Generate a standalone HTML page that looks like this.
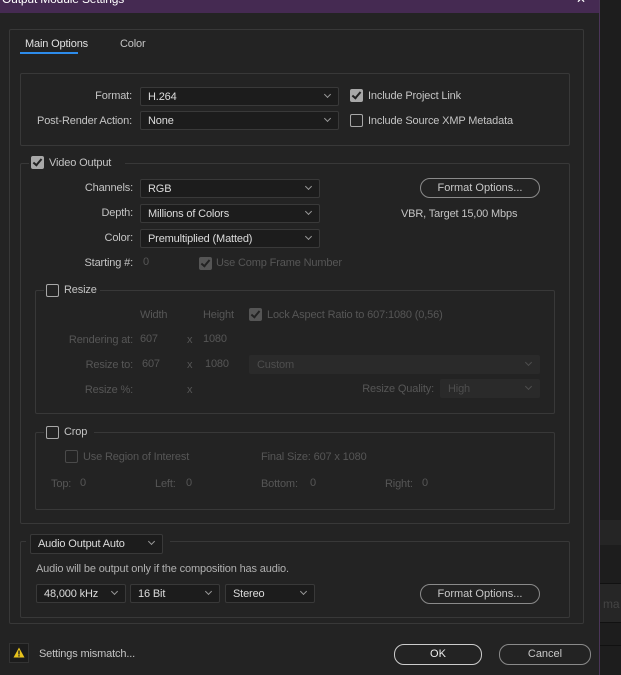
<!DOCTYPE html>
<html><head><meta charset="utf-8"><style>
*{margin:0;padding:0;box-sizing:border-box}
body{width:621px;height:675px;overflow:hidden;background:#232323;font-family:"Liberation Sans",sans-serif;font-size:11px;color:#c4c4c4;position:relative}
.a{position:absolute;white-space:nowrap;line-height:16px;letter-spacing:-0.15px}
.r{text-align:right}
.d{color:#565656}
.box{position:absolute;border:1px solid #383838;border-radius:2px}
.dd{position:absolute;background:#1c1c1c;border:1px solid #393939;border-radius:2px;color:#dcdcdc;padding-left:7px;line-height:18px;letter-spacing:-0.15px}
.dd.dis{background:#2a2a2a;border-color:#2a2a2a;color:#4e4e4e}
.dd:after{content:"";position:absolute;right:8px;top:4px;width:4px;height:4px;border-right:1px solid #999;border-bottom:1px solid #999;transform:rotate(45deg)}
.dd.dis:after{border-color:#4e4e4e}
.cb{position:absolute;width:13px;height:13px;border:1.5px solid #a8a8a8;border-radius:2px}
.cb.on{background:#a8a8a8;border-color:#a8a8a8}
.cb.on:after{content:"";position:absolute;left:3px;top:0px;width:3px;height:7px;border-right:2px solid #222;border-bottom:2px solid #222;transform:rotate(40deg)}
.cb.dis{border-color:#4a4a4a}
.cb.dis.on{background:#555;border-color:#555}
.btn{position:absolute;border:1px solid #8a8a8a;border-radius:10px;text-align:center;line-height:19px;color:#c8c8c8}
.leg{position:absolute;background:#232323;padding:0 6px 0 2px}
</style></head><body>
<div class="a" style="left:0;top:0;width:600px;height:13px;background:#452a52"></div>
<div class="a" style="left:2px;top:-9px;color:#fff;font-size:12px">Output Module Settings</div>
<div class="a" style="left:576px;top:-9px;color:#fff;font-size:12px">✕</div>
<div class="a" style="left:599px;top:0;width:1px;height:675px;background:#4b3558"></div>
<div class="a" style="left:600px;top:0;width:21px;height:675px;background:#1d1d1d"></div>
<div class="a" style="left:600px;top:520px;width:21px;height:25px;background:#252525"></div>
<div class="a" style="left:600px;top:583px;width:21px;height:40px;background:#262626;border-top:1px solid #111;border-bottom:1px solid #111"></div>
<div class="a" style="left:600px;top:645px;width:21px;height:1px;background:#111"></div>
<div class="a" style="left:603px;top:596px;color:#444;font-size:12px">ma</div>

<div class="box" style="left:9px;top:29px;width:575px;height:595px"></div>
<div class="a" style="left:25px;top:36px;color:#e0e0e0">Main Options</div>
<div class="a" style="left:20px;top:52px;width:58px;height:2px;background:#2d8ceb"></div>
<div class="a" style="left:120px;top:36px">Color</div>

<div class="box" style="left:20px;top:73px;width:550px;height:73px"></div>
<div class="a r" style="left:20px;width:112px;top:88px">Format:</div>
<div class="dd" style="left:140px;top:87px;width:199px;height:19px">H.264</div>
<div class="a r" style="left:20px;width:112px;top:113px">Post-Render Action:</div>
<div class="dd" style="left:140px;top:111px;width:199px;height:19px">None</div>
<div class="cb on" style="left:350px;top:89px"></div>
<div class="a" style="left:368px;top:88px">Include Project Link</div>
<div class="cb" style="left:350px;top:114px"></div>
<div class="a" style="left:368px;top:113px">Include Source XMP Metadata</div>

<div class="box" style="left:20px;top:163px;width:550px;height:361px"></div>
<div class="leg" style="left:29px;top:155px;width:96px;height:16px"></div>
<div class="cb on" style="left:31px;top:156px"></div>
<div class="a" style="left:49px;top:155px">Video Output</div>
<div class="a r" style="left:20px;width:113px;top:180px">Channels:</div>
<div class="dd" style="left:140px;top:179px;width:180px;height:19px">RGB</div>
<div class="a r" style="left:20px;width:113px;top:205px">Depth:</div>
<div class="dd" style="left:140px;top:204px;width:180px;height:19px">Millions of Colors</div>
<div class="a r" style="left:20px;width:113px;top:230px">Color:</div>
<div class="dd" style="left:140px;top:229px;width:180px;height:19px">Premultiplied (Matted)</div>
<div class="a r" style="left:20px;width:113px;top:255px">Starting #:</div>
<div class="a d" style="left:143px;top:254px">0</div>
<div class="cb dis on" style="left:199px;top:257px"></div>
<div class="a d" style="left:216px;top:255px">Use Comp Frame Number</div>
<div class="btn" style="left:420px;top:178px;width:120px;height:20px">Format Options...</div>
<div class="a" style="left:401px;top:206px">VBR, Target 15,00 Mbps</div>

<div class="box" style="left:35px;top:290px;width:520px;height:124px"></div>
<div class="leg" style="left:44px;top:282px;width:56px;height:16px"></div>
<div class="cb" style="left:46px;top:284px"></div>
<div class="a" style="left:64px;top:282px">Resize</div>
<div class="a d" style="left:140px;top:307px">Width</div>
<div class="a d" style="left:203px;top:307px">Height</div>
<div class="cb dis on" style="left:249px;top:308px"></div>
<div class="a d" style="left:267px;top:307px">Lock Aspect Ratio to 607:1080 (0,56)</div>
<div class="a r d" style="left:35px;width:98px;top:332px">Rendering at:</div>
<div class="a d" style="left:140px;top:331px">607</div>
<div class="a d" style="left:187px;top:332px">x</div>
<div class="a d" style="left:203px;top:331px">1080</div>
<div class="a r d" style="left:35px;width:98px;top:357px">Resize to:</div>
<div class="a d" style="left:142px;top:356px">607</div>
<div class="a d" style="left:187px;top:357px">x</div>
<div class="a d" style="left:205px;top:356px">1080</div>
<div class="dd dis" style="left:249px;top:355px;width:291px;height:19px">Custom</div>
<div class="a r d" style="left:35px;width:98px;top:382px">Resize %:</div>
<div class="a d" style="left:187px;top:382px">x</div>
<div class="a r d" style="left:300px;width:134px;top:381px">Resize Quality:</div>
<div class="dd dis" style="left:440px;top:379px;width:100px;height:19px">High</div>

<div class="box" style="left:35px;top:432px;width:520px;height:78px"></div>
<div class="leg" style="left:44px;top:424px;width:50px;height:16px"></div>
<div class="cb" style="left:46px;top:426px"></div>
<div class="a" style="left:64px;top:424px">Crop</div>
<div class="cb dis" style="left:65px;top:450px"></div>
<div class="a d" style="left:83px;top:449px">Use Region of Interest</div>
<div class="a d" style="left:261px;top:449px">Final Size: 607 x 1080</div>
<div class="a d" style="left:51px;top:476px">Top:</div><div class="a d" style="left:80px;top:475px">0</div>
<div class="a d" style="left:155px;top:476px">Left:</div><div class="a d" style="left:186px;top:475px">0</div>
<div class="a d" style="left:261px;top:476px">Bottom:</div><div class="a d" style="left:310px;top:475px">0</div>
<div class="a d" style="left:385px;top:476px">Right:</div><div class="a d" style="left:422px;top:475px">0</div>

<div class="box" style="left:20px;top:541px;width:550px;height:77px"></div>
<div class="leg" style="left:26px;top:533px;width:144px;height:22px"></div>
<div class="dd" style="left:30px;top:534px;width:133px;height:20px;line-height:18px">Audio Output Auto</div>
<div class="a" style="left:36px;top:561px;color:#b0b0b0">Audio will be output only if the composition has audio.</div>
<div class="dd" style="left:36px;top:584px;width:90px;height:19px">48,000 kHz</div>
<div class="dd" style="left:130px;top:584px;width:90px;height:19px">16 Bit</div>
<div class="dd" style="left:225px;top:584px;width:90px;height:19px">Stereo</div>
<div class="btn" style="left:420px;top:584px;width:120px;height:20px">Format Options...</div>

<div class="a" style="left:9px;top:643px;width:20px;height:20px;background:#1c1c1c;border:1px solid #333"></div>
<svg class="a" style="left:13px;top:647px" width="12" height="11" viewBox="0 0 12 11"><path d="M6 0.5L11.5 10.5H0.5Z" fill="#e8c31c"/><rect x="5.3" y="3.5" width="1.4" height="4" fill="#222"/><rect x="5.3" y="8.2" width="1.4" height="1.3" fill="#222"/></svg>
<div class="a" style="left:39px;top:646px">Settings mismatch...</div>
<div class="btn" style="left:394px;top:644px;width:88px;height:21px;border:1.5px solid #ccc;color:#eee;line-height:18px">OK</div>
<div class="btn" style="left:499px;top:644px;width:92px;height:21px;line-height:19px">Cancel</div>
</body></html>
